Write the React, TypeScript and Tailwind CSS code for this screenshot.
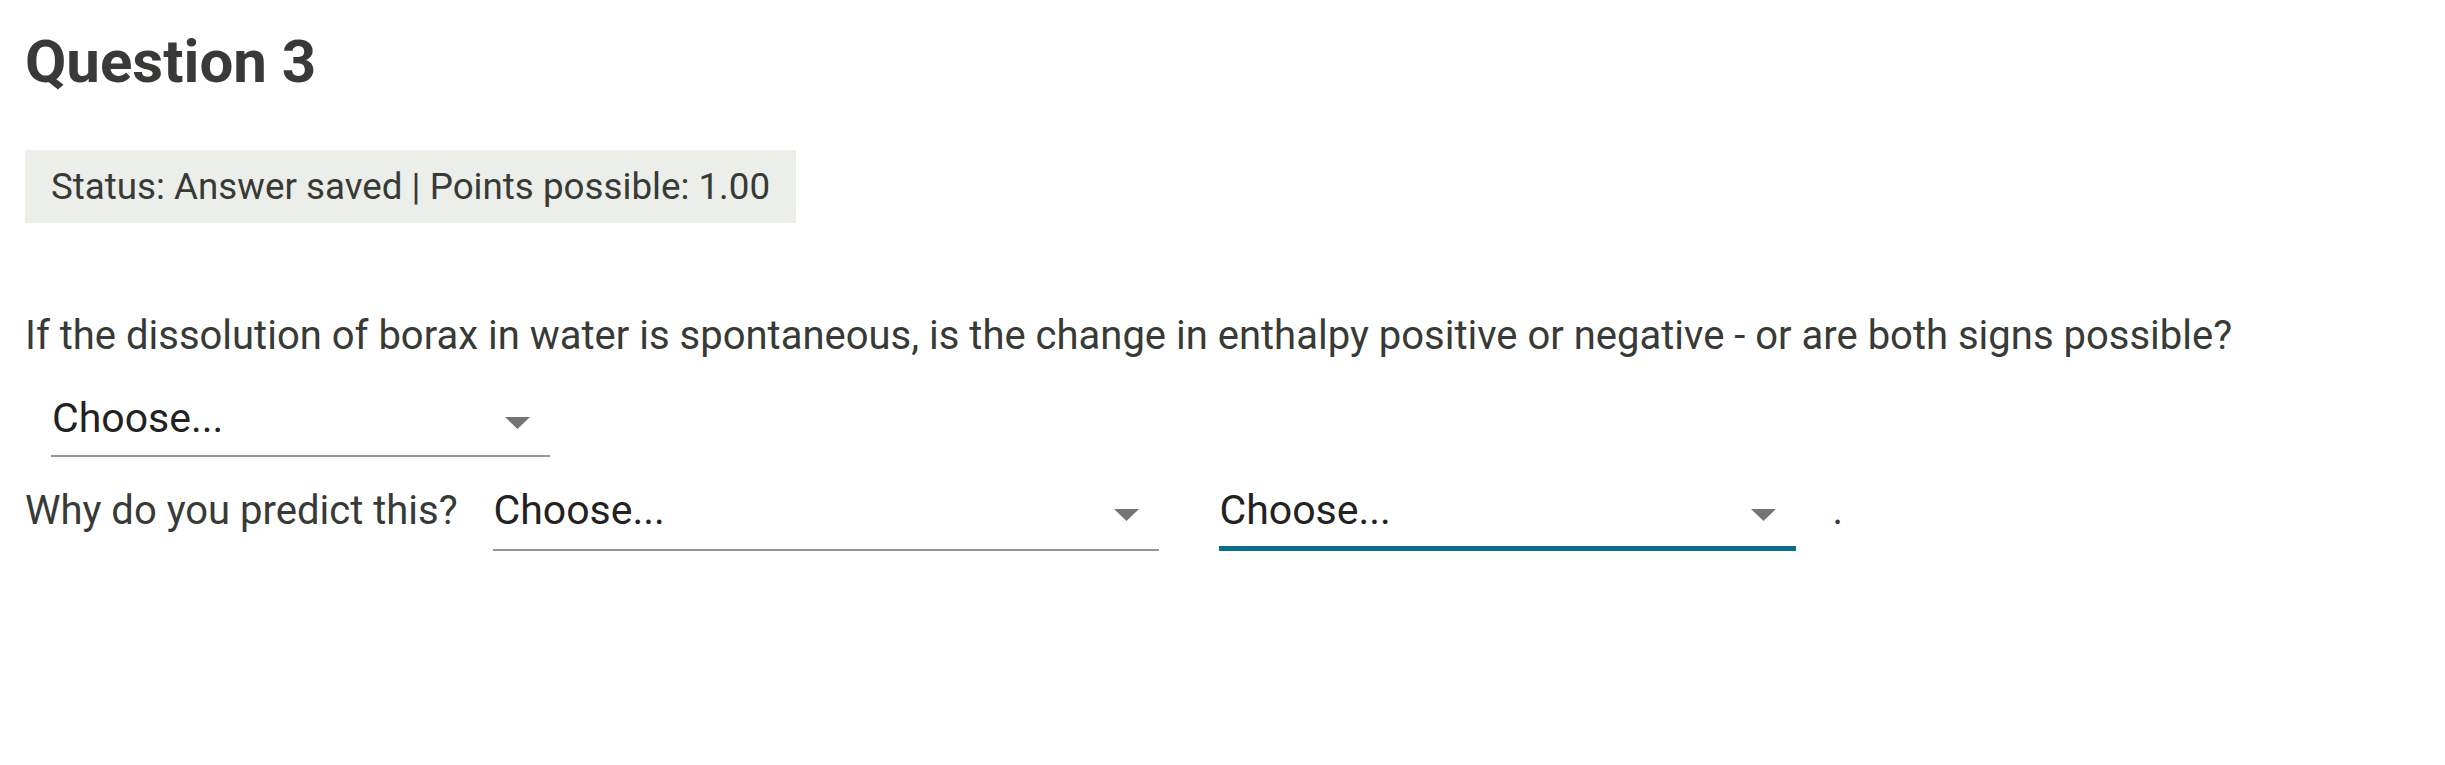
import React from "react";

const Arrow = () => (
  <svg width="25" height="12" viewBox="0 0 25 12" className="mt-[22px] shrink-0">
    <polygon points="0,0 25,0 12.5,12" fill="#757575" />
  </svg>
);

type SelectProps = {
  width: string;
  focused?: boolean;
  pad: string;
};

const FakeSelect = ({ width, focused, pad }: SelectProps) => (
  <div
    className={`flex justify-between ${width} ${pad} ${
      focused ? "border-b-[5px] border-[#0b6e88]" : "border-b-2 border-[#959595]"
    }`}
  >
    <span className="pl-[1px] text-[41px] leading-[47px] text-[#222222]">Choose...</span>
    <div className="mr-[20px]">
      <Arrow />
    </div>
  </div>
);

export default function App() {
  return (
    <div
      className="min-h-screen bg-white px-[25px] pt-[31px] text-[#373a36]"
      style={{ fontFamily: "Roboto, 'Liberation Sans', sans-serif" }}
    >
      <h2 className="text-[60px] font-bold leading-[62px]">Question 3</h2>

      <div className="mt-[57px] inline-flex h-[73px] items-center bg-[#eceee9] px-[26px]">
        <span className="text-[36.75px] leading-normal">Status: Answer saved | Points possible: 1.00</span>
      </div>

      <p className="mt-[89px] text-[40px] leading-[47px]">
        If the dissolution of borax in water is spontaneous, is the change in enthalpy positive or negative - or are
        both signs possible?
      </p>

      <div className="mt-[36px] ml-[26px]">
        <FakeSelect width="w-[499px]" pad="pb-[13px]" />
      </div>

      <div className="mt-[30px] flex items-start text-[40px] leading-[47px]">
        <span className="whitespace-nowrap">Why do you predict this?</span>
        <div className="ml-[35px]">
          <FakeSelect width="w-[666px]" pad="pb-[15px]" />
        </div>
        <div className="ml-[60px]">
          <FakeSelect width="w-[577px]" pad="pb-[12px]" focused />
        </div>
        <span className="ml-[37px]">.</span>
      </div>
    </div>
  );
}
